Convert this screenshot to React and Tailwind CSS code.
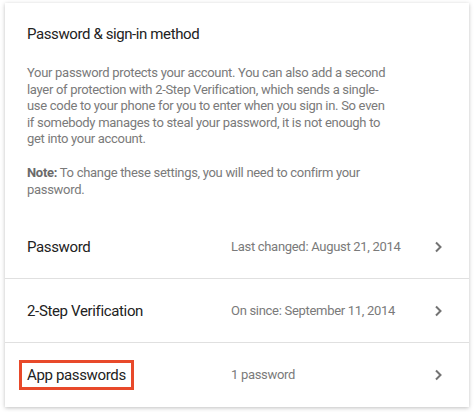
import React from "react";

function Chevron() {
  return (
    <svg width="10" height="12" viewBox="0 0 10 12" className="shrink-0">
      <path d="M3 1.5 L7.5 6 L3 10.5" fill="none" stroke="#737373" strokeWidth="2" />
    </svg>
  );
}

function Row({ label, value, highlight, last }) {
  return (
    <div className={`flex items-center h-[64px] ${last ? "" : "border-b border-[#e0e0e0]"}`}>
      <div className="w-[226px] pl-[22px] shrink-0">
        <span
          className={`inline-block text-[15px] tracking-[-0.35px] text-[#222] leading-[20px] ${
            highlight ? "border-[3px] border-[#e8492a] px-[5px] py-[2px] -ml-[8px]" : ""
          }`}
        >
          {label}
        </span>
      </div>
      <div className="flex-1 text-[13px] tracking-[-0.3px] text-[#7a7a7a]">{value}</div>
      <div className="w-[36px] flex justify-start">
        <Chevron />
      </div>
    </div>
  );
}

export default function App() {
  return (
    <div
      className="w-[474px] h-[412px] bg-white pt-[3px] pl-[5px]"
      style={{ fontFamily: "Roboto, 'Noto Sans', sans-serif" }}
    >
      <div className="w-[464px] h-[404px] bg-white shadow-[0_1px_4px_rgba(0,0,0,0.25)] flex flex-col">
        <div className="pl-[22px] pt-[21px] h-[212px]">
          <div className="text-[15px] tracking-[-0.4px] text-[#222] leading-[20px]">Password &amp; sign-in method</div>
          <p className="mt-[21px] w-[362px] text-[13px] tracking-[-0.3px] leading-[16.6px] text-[#7a7a7a]">
            Your password protects your account. You can also add a second layer of protection with 2-Step
            Verification, which sends a single-use code to your phone for you to enter when you sign in. So even if
            somebody manages to steal your password, it is not enough to get into your account.
          </p>
          <p className="mt-[17px] w-[362px] text-[13px] tracking-[-0.3px] leading-[16.6px] text-[#7a7a7a]">
            <span className="font-bold text-[#6a6a6a]">Note:</span> To change these settings, you will need to confirm
            your password.
          </p>
        </div>
        <div>
          <Row label="Password" value="Last changed: August 21, 2014" />
          <Row label="2-Step Verification" value="On since: September 11, 2014" />
          <Row label="App passwords" value="1 password" highlight last />
        </div>
      </div>
    </div>
  );
}
